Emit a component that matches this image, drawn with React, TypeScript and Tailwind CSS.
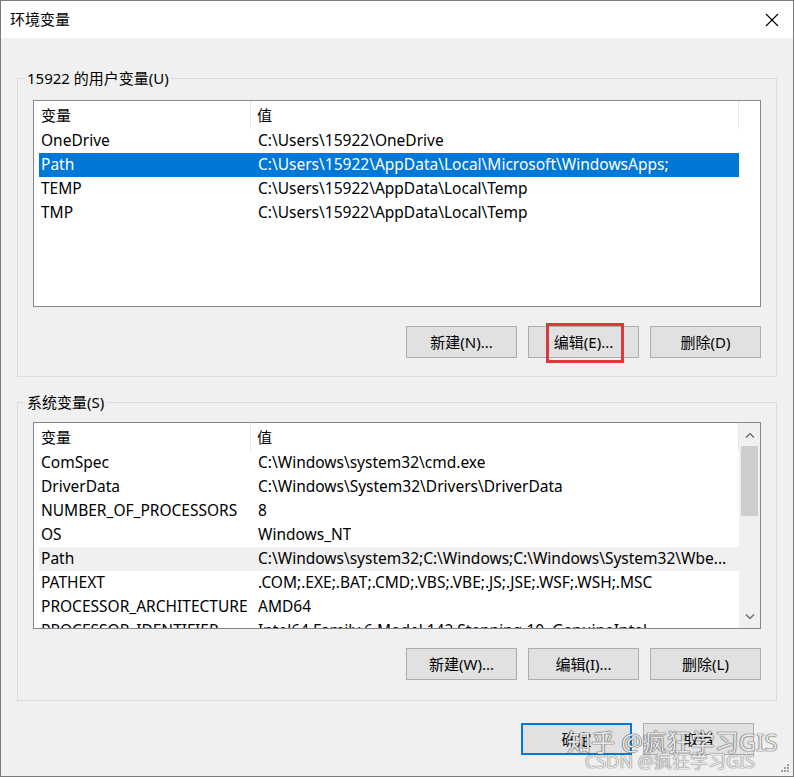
import React from 'react';

const userVars = [
  { name: 'OneDrive', value: 'C:\\Users\\15922\\OneDrive' },
  { name: 'Path', value: 'C:\\Users\\15922\\AppData\\Local\\Microsoft\\WindowsApps;', selected: true },
  { name: 'TEMP', value: 'C:\\Users\\15922\\AppData\\Local\\Temp' },
  { name: 'TMP', value: 'C:\\Users\\15922\\AppData\\Local\\Temp' },
];

const sysVars = [
  { name: 'ComSpec', value: 'C:\\Windows\\system32\\cmd.exe' },
  { name: 'DriverData', value: 'C:\\Windows\\System32\\Drivers\\DriverData' },
  { name: 'NUMBER_OF_PROCESSORS', value: '8' },
  { name: 'OS', value: 'Windows_NT' },
  { name: 'Path', value: 'C:\\Windows\\system32;C:\\Windows;C:\\Windows\\System32\\Wbe...', hover: true },
  { name: 'PATHEXT', value: '.COM;.EXE;.BAT;.CMD;.VBS;.VBE;.JS;.JSE;.WSF;.WSH;.MSC' },
  { name: 'PROCESSOR_ARCHITECTURE', value: 'AMD64' },
  { name: 'PROCESSOR_IDENTIFIER', value: 'Intel64 Family 6 Model 142 Stepping 10, GenuineIntel' },
];

type Row = { name: string; value: string; selected?: boolean; hover?: boolean };

const WinButton: React.FC<{ label: string; primary?: boolean }> = ({ label, primary }) => (
  <button
    className={`w-[111px] h-[32px] bg-[#e1e1e1] text-[15px] text-black ${primary ? 'border-2 border-[#0078d7]' : 'border border-[#adadad]'}`}
  >
    {label}
  </button>
);

const ListView: React.FC<{ rows: Row[]; scroll?: boolean }> = ({ rows, scroll }) => (
  <div className="relative h-[207px] border border-[#828790] bg-white overflow-hidden flex">
    <div className="flex-1 overflow-hidden">
      <div className="flex h-[28px] items-center text-[15px]">
        <div className="w-[217px] h-full flex items-center pl-[7px] border-r border-[#e5e5e5]">变量</div>
        <div className="w-[488px] h-full flex items-center pl-[6px] border-r border-[#e5e5e5]">值</div>
      </div>
      {rows.map((r) => (
        <div
          key={r.name}
          className={`ml-[5px] w-[700px] h-[24px] flex items-center text-[15.5px] whitespace-nowrap ${
            r.selected ? 'bg-[#0078d7] text-white' : r.hover ? 'bg-[#f0f0f0]' : ''
          }`}
        >
          <div className="w-[212px] shrink-0 pl-[2px]">{r.name}</div>
          <div className="pl-[7px] overflow-hidden">{r.value}</div>
        </div>
      ))}
    </div>
    {scroll && (
      <div className="w-[21px] h-full bg-[#f0f0f0] flex flex-col items-center">
        <div className="h-[23px] flex items-center justify-center">
          <svg width="10" height="6" viewBox="0 0 10 6" fill="none" stroke="#606060" strokeWidth="1.2">
            <path d="M1 5.5 L5 1.5 L9 5.5" />
          </svg>
        </div>
        <div className="w-[17px] h-[70px] bg-[#cdcdcd]" />
        <div className="flex-1" />
        <div className="h-[23px] flex items-center justify-center">
          <svg width="10" height="6" viewBox="0 0 10 6" fill="none" stroke="#606060" strokeWidth="1.2">
            <path d="M1 0.5 L5 4.5 L9 0.5" />
          </svg>
        </div>
      </div>
    )}
  </div>
);

export default function App() {
  return (
    <div
      className="relative w-[794px] h-[777px] bg-[#f0f0f0] border border-[#7a7a7a] flex flex-col text-black overflow-hidden"
      style={{ fontFamily: '"Noto Sans", "Noto Sans CJK SC", sans-serif' }}
    >
      <div className="h-[37px] bg-white flex items-center justify-between pl-[9px] pr-[14px] shrink-0">
        <span className="text-[15px]">环境变量</span>
        <svg width="14" height="14" viewBox="0 0 14 14" stroke="#000" strokeWidth="1.1">
          <path d="M1 1 L13 13 M13 1 L1 13" />
        </svg>
      </div>

      <div className="px-[16px]">
        <fieldset className="mt-[30px] border border-[#dcdcdc] px-[15px] pb-[18px]">
          <legend className="ml-[-8px] px-[2px] text-[15px] leading-[20px]">15922 的用户变量(U)</legend>
          <div className="mt-[12px]">
            <ListView rows={userVars} />
          </div>
          <div className="relative mt-[19px] flex justify-end gap-[11px]">
            <WinButton label="新建(N)..." />
            <div className="relative">
              <WinButton label="编辑(E)..." />
              <div className="absolute left-[18px] top-[-3px] w-[78px] h-[40px] border-[3px] border-[#e0373d]" />
            </div>
            <WinButton label="删除(D)" />
          </div>
        </fieldset>

        <fieldset className="mt-[15px] border border-[#dcdcdc] px-[15px] pb-[20px]">
          <legend className="ml-[-8px] px-[2px] text-[15px] leading-[20px]">系统变量(S)</legend>
          <div className="mt-[10px]">
            <ListView rows={sysVars} scroll />
          </div>
          <div className="mt-[19px] flex justify-end gap-[11px]">
            <WinButton label="新建(W)..." />
            <WinButton label="编辑(I)..." />
            <WinButton label="删除(L)" />
          </div>
        </fieldset>
      </div>

      <div className="mt-[22px] flex justify-end gap-[11px] pr-[39px]">
        <WinButton label="确定" primary />
        <WinButton label="取消" />
      </div>

      <div className="absolute left-[566px] top-[727px] text-[24px] leading-[28px] text-white/85 [text-shadow:0_0_1px_#555,0_0_1px_#555,0_0_1px_#555] pointer-events-none whitespace-nowrap">
        知乎 @疯狂学习GIS
      </div>
      <div className="absolute left-[584px] top-[749px] text-[18px] leading-[22px] text-white/85 [text-shadow:0_0_1px_#666,0_0_1px_#666] pointer-events-none whitespace-nowrap">
        CSDN @疯狂学习GIS
      </div>

      <svg className="absolute right-[3px] bottom-[3px]" width="10" height="10" viewBox="0 0 10 10" fill="#a0a0a0">
        <rect x="7" y="1" width="2" height="2" />
        <rect x="4" y="4" width="2" height="2" />
        <rect x="7" y="4" width="2" height="2" />
        <rect x="1" y="7" width="2" height="2" />
        <rect x="4" y="7" width="2" height="2" />
        <rect x="7" y="7" width="2" height="2" />
      </svg>
    </div>
  );
}
